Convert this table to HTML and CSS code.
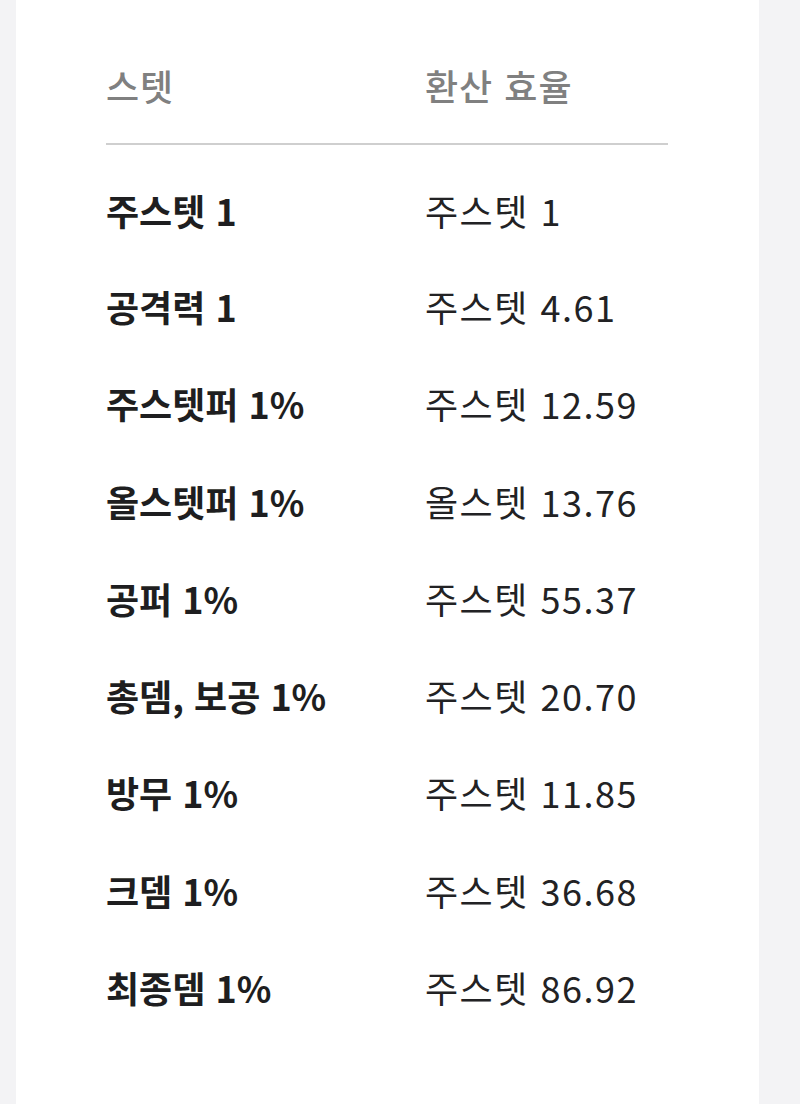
FILE: index.html
```html
<!DOCTYPE html>
<html lang="ko">
<head>
<meta charset="utf-8">
<link rel="stylesheet" href="styles.css">
</head>
<body>
<div class="card">
  <table class="stats">
    <thead>
      <tr><th class="c1">스텟</th><th class="c2">환산 효율</th></tr>
    </thead>
    <tbody>
      <tr class="first"><td class="name">주스텟 1</td><td class="val">주스텟 1</td></tr>
      <tr><td class="name">공격력 1</td><td class="val">주스텟 4.61</td></tr>
      <tr><td class="name">주스텟퍼 1%</td><td class="val">주스텟 12.59</td></tr>
      <tr><td class="name">올스텟퍼 1%</td><td class="val">올스텟 13.76</td></tr>
      <tr><td class="name">공퍼 1%</td><td class="val">주스텟 55.37</td></tr>
      <tr><td class="name">총뎀, 보공 1%</td><td class="val">주스텟 20.70</td></tr>
      <tr><td class="name">방무 1%</td><td class="val">주스텟 11.85</td></tr>
      <tr><td class="name">크뎀 1%</td><td class="val">주스텟 36.68</td></tr>
      <tr><td class="name">최종뎀 1%</td><td class="val">주스텟 86.92</td></tr>
    </tbody>
  </table>
</div>
</body>
</html>
```
FILE: styles.css
```css
html, body {
  margin: 0;
  padding: 0;
  background: #f3f3f5;
  height: 1104px;
  overflow: hidden;
}
body {
  font-family: "Noto Sans CJK KR", "Noto Sans", sans-serif;
}
.card {
  margin-left: 16px;
  width: 743px;
  height: 1104px;
  background: #ffffff;
  padding-top: 60px;
  box-sizing: border-box;
}
.stats {
  margin-left: 90px;
  width: 562px;
  border-collapse: collapse;
  font-size: 36px;
  line-height: 51px;
}
.stats th {
  text-align: left;
  font-weight: 500;
  color: #808080;
  letter-spacing: 1px;
  padding: 0 0 32px 0;
  border-bottom: 2px solid #cfcfcf;
}
.c1 { width: 319px; }
.stats td {
  padding: 0;
  height: 97.25px;
  vertical-align: middle;
}
.stats tr.first td {
  height: 114px;
  padding-top: 18px;
  box-sizing: border-box;
}
.name {
  font-weight: 700;
  color: #1e1e20;
}
.val {
  font-weight: 400;
  color: #222224;
  letter-spacing: 1.5px;
}
```
